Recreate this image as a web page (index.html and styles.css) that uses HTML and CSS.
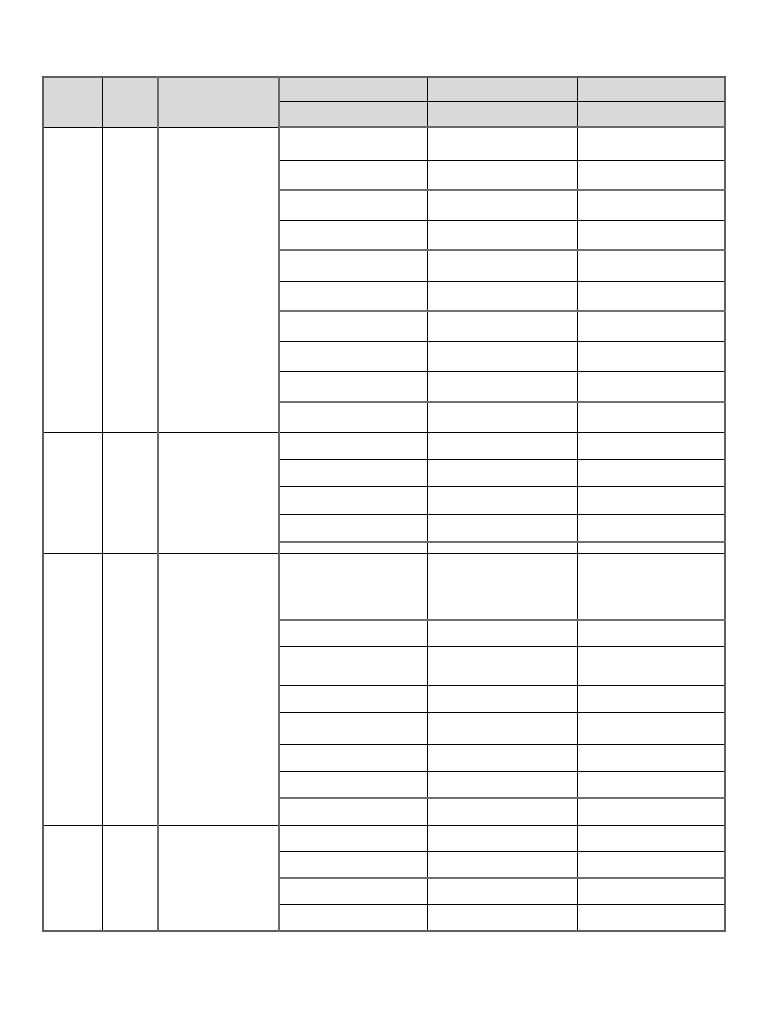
FILE: index.html
```html
<!DOCTYPE html>
<html lang="en">
<head>
<meta charset="utf-8">
<title>Table</title>
<link rel="stylesheet" href="styles.css">
</head>
<body>
<table class="grid">
  <colgroup>
    <col class="c1"><col class="c2"><col class="c3"><col class="c4"><col class="c5"><col class="c6">
  </colgroup>
  <thead>
    <tr class="h24">
      <th rowspan="2" class="thin-r"></th>
      <th rowspan="2"></th>
      <th rowspan="2"></th>
      <th></th><th></th><th></th>
    </tr>
    <tr class="h26">
      <th></th><th></th><th></th>
    </tr>
  </thead>
  <tbody>
    <tr class="h33">
      <td rowspan="10" class="thin-r"></td><td rowspan="10"></td><td rowspan="10"></td>
      <td></td><td></td><td></td>
    </tr>
    <tr class="h30 g"><td></td><td></td><td></td></tr>
    <tr class="h30"><td></td><td></td><td></td></tr>
    <tr class="h30 g"><td></td><td></td><td></td></tr>
    <tr class="h31"><td></td><td></td><td></td></tr>
    <tr class="h30 g"><td></td><td></td><td></td></tr>
    <tr class="h30"><td></td><td></td><td></td></tr>
    <tr class="h30"><td></td><td></td><td></td></tr>
    <tr class="h31 g"><td></td><td></td><td></td></tr>
    <tr class="h30"><td></td><td></td><td></td></tr>

    <tr class="h27">
      <td rowspan="5" class="thin-r"></td><td rowspan="5"></td><td rowspan="5"></td>
      <td></td><td></td><td></td>
    </tr>
    <tr class="h27"><td></td><td></td><td></td></tr>
    <tr class="h28"><td></td><td></td><td></td></tr>
    <tr class="h28 g"><td></td><td></td><td></td></tr>
    <tr class="h11"><td></td><td></td><td></td></tr>

    <tr class="h67 g">
      <td rowspan="8" class="thin-r"></td><td rowspan="8"></td><td rowspan="8"></td>
      <td></td><td></td><td></td>
    </tr>
    <tr class="h26"><td></td><td></td><td></td></tr>
    <tr class="h39"><td></td><td></td><td></td></tr>
    <tr class="h27"><td></td><td></td><td></td></tr>
    <tr class="h32"><td></td><td></td><td></td></tr>
    <tr class="h27"><td></td><td></td><td></td></tr>
    <tr class="h27 g"><td></td><td></td><td></td></tr>
    <tr class="h27"><td></td><td></td><td></td></tr>

    <tr class="h26">
      <td rowspan="4" class="thin-r"></td><td rowspan="4"></td><td rowspan="4"></td>
      <td></td><td></td><td></td>
    </tr>
    <tr class="h27 g"><td></td><td></td><td></td></tr>
    <tr class="h26"><td></td><td></td><td></td></tr>
    <tr class="h27"><td></td><td></td><td></td></tr>
  </tbody>
</table>
</body>
</html>
```

FILE: styles.css
```css
html, body {
  margin: 0;
  padding: 0;
  background: #ffffff;
  font-family: "Liberation Sans", Arial, sans-serif;
}

.grid {
  margin: 76px 0 0 42px;
  border-collapse: collapse;
  table-layout: fixed;
  width: 682px;
  border: 2px solid #5f5f5f;
}

.c1 { width: 59px; }
.c2 { width: 56px; }
.c3 { width: 121px; }
.c4 { width: 148px; }
.c5 { width: 150px; }
.c6 { width: 148px; }

.grid th,
.grid td {
  padding: 0;
  border: 1px solid #000000;
}

.grid th {
  background: #d9d9d9;
  font-weight: normal;
}

.grid th:nth-child(n),
.grid td {
  border-right-width: 1px;
}

/* the two gray rules on either side of the third column */
.grid thead tr:first-child th:nth-child(2),
.grid thead tr:first-child th:nth-child(3),
.grid td[rowspan]:not(.thin-r) {
  border-right: 2px solid #6a6a6a;
}

.grid thead tr:last-child th {
  border-bottom: 2px solid #6a6a6a;
}

.grid tr.g > td {
  border-bottom: 2px solid #707070;
}

.grid tr.g > td[rowspan] {
  border-bottom: 1px solid #000000;
}

.h11 { height: 11px; }
.h24 { height: 24px; }
.h26 { height: 26px; }
.h27 { height: 27px; }
.h28 { height: 28px; }
.h30 { height: 30px; }
.h31 { height: 31px; }
.h32 { height: 32px; }
.h33 { height: 33px; }
.h39 { height: 39px; }
.h67 { height: 67px; }
```
